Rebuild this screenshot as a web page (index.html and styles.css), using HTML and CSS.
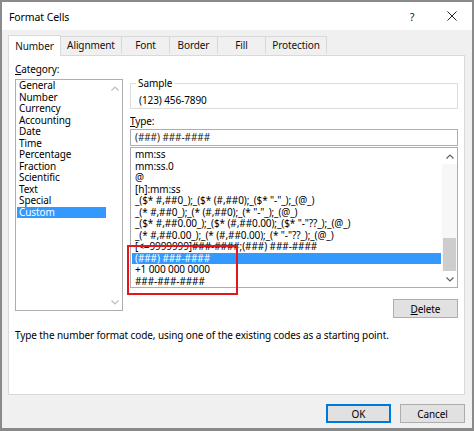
FILE: index.html
```html
<!DOCTYPE html>
<html>
<head>
<meta charset="utf-8">
<link rel="stylesheet" href="styles.css">
</head>
<body>
<div class="window">
  <div class="titlebar">
    <span class="title">Format Cells</span>
    <div class="title-controls">
      <span class="cap-btn help">?</span>
      <span class="cap-btn"><svg class="close" width="10" height="10" viewBox="0 0 11 11"><path d="M0.5 0.5 L10.5 10.5 M10.5 0.5 L0.5 10.5" stroke="#222" stroke-width="1.1" fill="none"/></svg></span>
    </div>
  </div>
  <div class="body">
    <div class="tabs">
      <div class="tab active">Number</div>
      <div class="tab">Alignment</div>
      <div class="tab">Font</div>
      <div class="tab">Border</div>
      <div class="tab">Fill</div>
      <div class="tab">Protection</div>
    </div>
    <div class="panel">
      <div class="columns">
        <div class="left-col">
          <div class="label"><u>C</u>ategory:</div>
          <div class="listbox cat-list">
            <ul class="items">
              <li>General</li>
              <li>Number</li>
              <li>Currency</li>
              <li>Accounting</li>
              <li>Date</li>
              <li>Time</li>
              <li>Percentage</li>
              <li>Fraction</li>
              <li>Scientific</li>
              <li>Text</li>
              <li>Special</li>
              <li class="selected">Custom</li>
            </ul>
            <div class="scrollbar disabled">
              <div class="sb-btn"><svg width="8" height="5" viewBox="0 0 8 5"><path d="M0.5 4.5 L4 1 L7.5 4.5" stroke="currentColor" stroke-width="1.2" fill="none"/></svg></div>
              <div class="sb-track"></div>
              <div class="sb-btn"><svg width="8" height="5" viewBox="0 0 8 5"><path d="M0.5 0.5 L4 4 L7.5 0.5" stroke="currentColor" stroke-width="1.2" fill="none"/></svg></div>
            </div>
          </div>
        </div>
        <div class="right-col">
          <fieldset class="sample">
            <legend>Sample</legend>
            <div class="sample-text">(123) 456-7890</div>
          </fieldset>
          <div class="label type-label"><u>T</u>ype:</div>
          <div class="type-input">(###) ###-####</div>
          <div class="format-wrap">
            <div class="listbox fmt-list">
              <ul class="items">
                <li>mm:ss</li>
                <li>mm:ss.0</li>
                <li>@</li>
                <li>[h]:mm:ss</li>
                <li>_($* #,##0_);_($* (#,##0);_($* "-"_);_(@_)</li>
                <li>_(* #,##0_);_(* (#,##0);_(* "-"_);_(@_)</li>
                <li>_($* #,##0.00_);_($* (#,##0.00);_($* "-"??_);_(@_)</li>
                <li>_(* #,##0.00_);_(* (#,##0.00);_(* "-"??_);_(@_)</li>
                <li>[&lt;=9999999]###-####;(###) ###-####</li>
                <li class="selected">(###) ###-####</li>
                <li>+1 000 000 0000</li>
                <li>###-###-####</li>
              </ul>
              <div class="scrollbar">
                <div class="sb-btn"><svg width="8" height="5" viewBox="0 0 8 5"><path d="M0.5 4.5 L4 1 L7.5 4.5" stroke="currentColor" stroke-width="1.2" fill="none"/></svg></div>
                <div class="sb-track"><div class="sb-thumb"></div></div>
                <div class="sb-btn"><svg width="8" height="5" viewBox="0 0 8 5"><path d="M0.5 0.5 L4 4 L7.5 0.5" stroke="currentColor" stroke-width="1.2" fill="none"/></svg></div>
              </div>
            </div>
            <div class="highlight-box"></div>
          </div>
          <div class="delete-row">
            <button class="btn"><u>D</u>elete</button>
          </div>
        </div>
      </div>
      <p class="hint">Type the number format code, using one of the existing codes as a starting point.</p>
    </div>
    <div class="buttons">
      <button class="btn default">OK</button>
      <button class="btn">Cancel</button>
    </div>
  </div>
</div>
</body>
</html>
```

FILE: styles.css
```css
* { box-sizing: border-box; }
html, body { margin: 0; padding: 0; }
body {
  width: 474px;
  height: 431px;
  overflow: hidden;
  font-family: "Noto Sans", "Open Sans", sans-serif;
  font-size: 10px;
  letter-spacing: -0.1px;
  color: #000;
  background: #fff;
}
.window {
  width: 474px;
  height: 431px;
  border: 2px solid #8a8a8a;
  border-bottom-width: 3px;
  background: #f0f0f0;
  display: flex;
  flex-direction: column;
}
.titlebar {
  height: 28px;
  background: #fff;
  display: flex;
  align-items: center;
  justify-content: space-between;
  padding: 0 0 0 7px;
}
.title { font-size: 10.5px; letter-spacing: -0.1px; padding-top: 2px; }
.title-controls { display: flex; align-items: stretch; height: 28px; }
.cap-btn {
  width: 40px;
  display: flex;
  align-items: center;
  justify-content: center;
}
.help { font-size: 11px; color: #222; }
.close { display: block; width: 10px; height: 10px; }
.body { padding: 4px 7px 0 6px; flex: 1; display: flex; flex-direction: column; }
.tabs { display: flex; align-items: flex-end; height: 21px; position: relative; z-index: 1; }
.tab {
  height: 18px;
  margin-bottom: 1px;
  border: 1px solid #d9d9d9;
  border-bottom: none;
  border-left: none;
  background: #f0f0f0;
  line-height: 17px;
  text-align: center;
  color: #111;
}
.tab:nth-child(1) { width: 53px; }
.tab:nth-child(2) { width: 61px; }
.tab:nth-child(3) { width: 48px; }
.tab:nth-child(4) { width: 48px; }
.tab:nth-child(5) { width: 48px; }
.tab:nth-child(6) { width: 61px; }
.tab.active {
  height: 21px;
  margin-bottom: -1px;
  background: #fff;
  border-left: 1px solid #d9d9d9;
  line-height: 20px;
}
.panel {
  height: 340px;
  background: #fff;
  border: 1px solid #d9d9d9;
  padding: 7px 6px 0 6px;
}
.columns { display: flex; gap: 7px; }
.left-col { width: 108px; display: flex; flex-direction: column; }
.label { line-height: 12px; height: 12px; }
.cat-list { margin-top: 4px; height: 232px; }
.listbox {
  border: 1px solid #abadb3;
  background: #fff;
  display: flex;
}
.items {
  list-style: none;
  margin: 0;
  padding: 0 1px;
  flex: 1;
  min-width: 0;
  white-space: nowrap;
  overflow: hidden;
}
.items li {
  height: 11.5px;
  line-height: 11.5px;
  padding-left: 2px;
}
.items li.selected { background: #3399ff; color: #fff; }
.scrollbar {
  width: 15px;
  display: flex;
  flex-direction: column;
  color: #606060;
  background: #fff;
}
.scrollbar.disabled { color: #bdbdbd; }
.sb-btn { height: 16px; display: flex; align-items: center; justify-content: center; }
.sb-btn svg { display: block; }
.sb-track { flex: 1; display: flex; flex-direction: column; justify-content: flex-end; align-items: center; background: #f7f7f7; }
.scrollbar.disabled .sb-track { background: #fff; }
.sb-thumb { width: 13px; height: 33px; background: #cdcdcd; }
.right-col { width: 328px; padding-top: 14px; display: flex; flex-direction: column; }
.sample {
  margin: 0;
  padding: 5px 8px 2px 8px;
  border: 1px solid #dcdcdc;
  min-width: 0;
}
.sample legend {
  padding: 0 2px;
  margin-left: -3px;
  line-height: 12px;
}
.sample-text { line-height: 12px; height: 12px; }
.type-label { margin-top: 6px; }
.type-input {
  margin-top: 2px;
  height: 17px;
  border: 1px solid #abadb3;
  background: #fff;
  padding-left: 4px;
  line-height: 15px;
  color: #222;
}
.format-wrap { position: relative; margin-top: 1px; }
.fmt-list { height: 141px; }
.fmt-list .items { padding-top: 1px; }
.fmt-list .items li { padding-left: 3px; }
.highlight-box {
  position: absolute;
  left: -3px;
  top: 98px;
  width: 111px;
  height: 50px;
  border: 2px solid #e4161b;
  pointer-events: none;
}
.delete-row { display: flex; justify-content: flex-end; margin-top: 11px; }
.btn {
  font-family: inherit;
  font-size: 10px;
  letter-spacing: -0.1px;
  width: 65px;
  height: 19px;
  padding: 0;
  margin: 0;
  border: 1px solid #adadad;
  background: #e1e1e1;
  color: #000;
  line-height: 16px;
}
.btn.default { border: 1px solid #0078d7; box-shadow: inset 0 0 0 1px #0078d7; }
.hint { margin: 11px 0 0 0; line-height: 12px; }
.buttons { display: flex; justify-content: flex-end; gap: 9px; margin-top: 9px; }
```
